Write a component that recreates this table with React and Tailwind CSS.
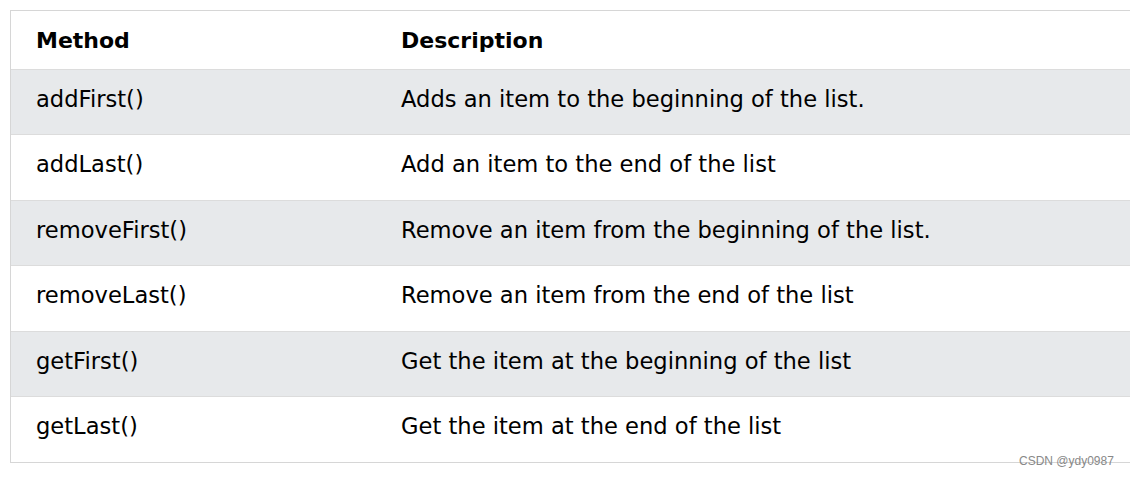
const rows = [
  ["addFirst()", "Adds an item to the beginning of the list.", "h-[65px]", true],
  ["addLast()", "Add an item to the end of the list", "h-[66px]", false],
  ["removeFirst()", "Remove an item from the beginning of the list.", "h-[65px]", true],
  ["removeLast()", "Remove an item from the end of the list", "h-[66px]", false],
  ["getFirst()", "Get the item at the beginning of the list", "h-[65px]", true],
  ["getLast()", "Get the item at the end of the list", "h-[66px]", false],
];

export default function App() {
  return (
    <div className="relative w-[1130px] h-[478px] bg-white pt-[10px] pl-[10px] overflow-hidden text-[22.6px] text-black" style={{ fontFamily: '"DejaVu Sans", Verdana, sans-serif' }}>
      <div className="w-[1130px] border-l border-t border-b border-[#d6d6d6]">
        {/* Header */}
        <div className="flex items-center h-[58px] font-bold text-[22px]">
          <div className="w-[366px] pl-[25px]">Method</div>
          <div className="pl-[24px]">Description</div>
        </div>
        {rows.map(([m, d, h, shaded]) => (
          <div key={m} className={`flex items-center pb-[5px] border-t border-[#dcdcdc] ${h} ${shaded ? "bg-[#e7e9eb]" : "bg-white"}`}>
            <div className="w-[366px] pl-[25px]">{m}</div>
            <div className="pl-[24px]">{d}</div>
          </div>
        ))}
      </div>

      {/* Watermark */}
      <div className="absolute left-[1019px] top-[455px] text-[12px] text-[#888] leading-none" style={{ fontFamily: '"Liberation Sans", Arial, sans-serif' }}>
        CSDN @ydy0987
      </div>
    </div>
  );
}
